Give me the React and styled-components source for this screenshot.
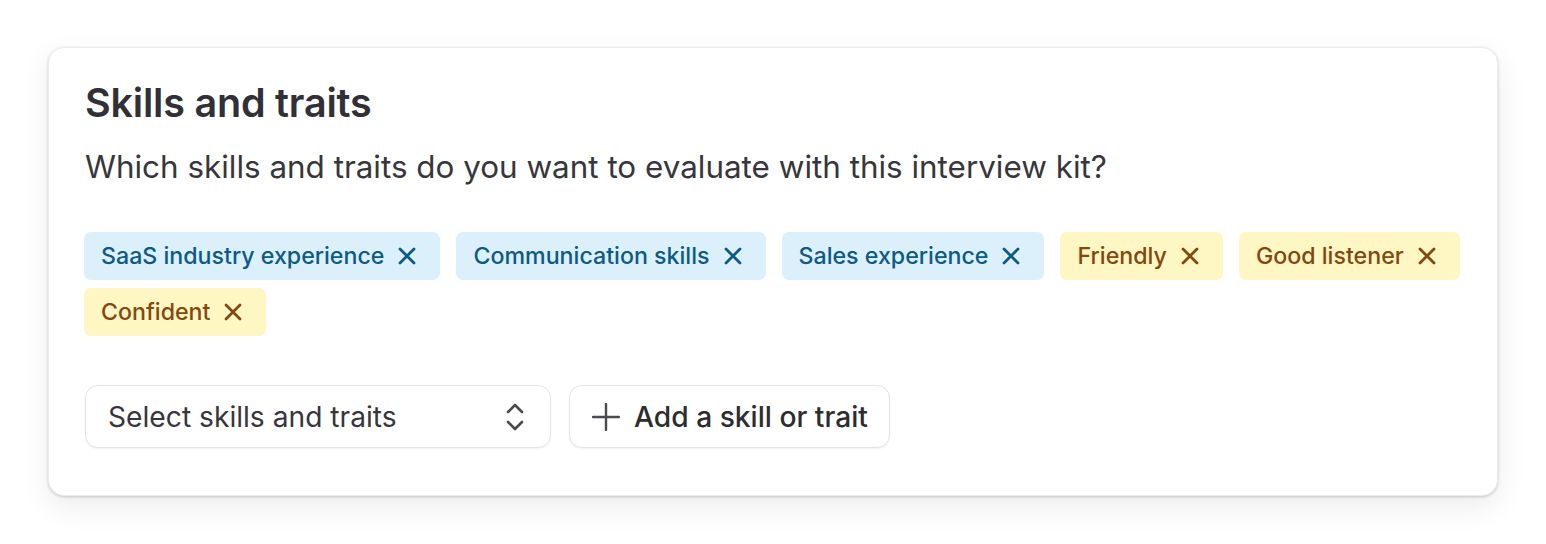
import React from 'react'
import styled, { createGlobalStyle } from 'styled-components'

const GlobalStyle = createGlobalStyle`
    body {
        margin: 0;
        background: #ffffff;
        font-family: Inter, "Noto Sans", sans-serif;
        -webkit-font-smoothing: antialiased;
    }
`

const Page = styled.div`
    padding: 47px 48px;
`

const Card = styled.section`
    background: #ffffff;
    border-radius: 16px;
    border: 1px solid #ececee;
    box-shadow: 0 1px 3px rgba(0, 0, 0, 0.18), 0 10px 30px rgba(0, 0, 0, 0.08);
    padding: 30px 20px 47px 36px;
`

const Title = styled.h2`
    margin: 0;
    font-size: 39.5px;
    line-height: 50px;
    font-weight: 600;
    color: #303036;
    letter-spacing: -0.2px;
`

const Subtitle = styled.p`
    margin: 17px 0 0;
    font-size: 31.4px;
    line-height: 44px;
    color: #36363c;
`

const TagList = styled.div`
    display: flex;
    flex-wrap: wrap;
    gap: 8px 16px;
    margin: 43px 0 0 -1px;
`

const palette = {
    blue: { bg: '#dcf0fc', fg: '#0c5a86' },
    yellow: { bg: '#fef7c3', fg: '#84480f' },
}

const Tag = styled.span`
    display: inline-flex;
    align-items: center;
    gap: 14px;
    height: 48px;
    padding: 0 24px 0 17px;
    border-radius: 7px;
    background: ${p => palette[p.$tone].bg};
    color: ${p => palette[p.$tone].fg};
    font-size: 23.2px;
    font-weight: 500;
    box-sizing: border-box;
`

const Controls = styled.div`
    display: flex;
    gap: 18px;
    margin-top: 49px;
`

const Select = styled.div`
    display: flex;
    align-items: center;
    justify-content: space-between;
    width: 466px;
    height: 63px;
    box-sizing: border-box;
    padding: 0 25px 0 22px;
    border: 1.5px solid #e4e4e7;
    border-radius: 13px;
    box-shadow: 0 1px 2px rgba(0, 0, 0, 0.06);
    font-size: 28.2px;
    color: #36363c;
`

const AddButton = styled.button`
    display: inline-flex;
    align-items: center;
    gap: 14px;
    height: 63px;
    box-sizing: border-box;
    padding: 0 21px 0 22px;
    border: 1.5px solid #e4e4e7;
    border-radius: 13px;
    background: #ffffff;
    box-shadow: 0 1px 2px rgba(0, 0, 0, 0.06);
    font-family: inherit;
    font-size: 28.2px;
    font-weight: 500;
    color: #2c2c31;
`

const CloseIcon = () => (
    <svg width="18" height="18" viewBox="0 0 18 18" fill="none" stroke="currentColor" strokeWidth="2.8" strokeLinecap="round">
        <path d="M2 2 16 16M16 2 2 16" />
    </svg>
)

const UpDownIcon = () => (
    <svg width="20" height="28" viewBox="0 0 20 28" fill="none" stroke="#4a4a50" strokeWidth="2.6" strokeLinecap="round" strokeLinejoin="round">
        <path d="M3 9 10 2 17 9M3 19 10 26 17 19" />
    </svg>
)

const PlusIcon = () => (
    <svg width="28" height="28" viewBox="0 0 28 28" fill="none" stroke="#4a4a50" strokeWidth="2.4" strokeLinecap="round">
        <path d="M14 1V27M1 14H27" />
    </svg>
)

const tags = [
    { label: 'SaaS industry experience', tone: 'blue' },
    { label: 'Communication skills', tone: 'blue' },
    { label: 'Sales experience', tone: 'blue' },
    { label: 'Friendly', tone: 'yellow' },
    { label: 'Good listener', tone: 'yellow' },
    { label: 'Confident', tone: 'yellow' },
]

const App = () => {
    return (
        <Page>
            <GlobalStyle />
            <Card>
                <Title>Skills and traits</Title>
                <Subtitle>Which skills and traits do you want to evaluate with this interview kit?</Subtitle>
                <TagList>
                    {tags.map(t => (
                        <Tag key={t.label} $tone={t.tone}>
                            {t.label}
                            <CloseIcon />
                        </Tag>
                    ))}
                </TagList>
                <Controls>
                    <Select>
                        Select skills and traits
                        <UpDownIcon />
                    </Select>
                    <AddButton>
                        <PlusIcon />
                        Add a skill or trait
                    </AddButton>
                </Controls>
            </Card>
        </Page>
    )
}

export default App
